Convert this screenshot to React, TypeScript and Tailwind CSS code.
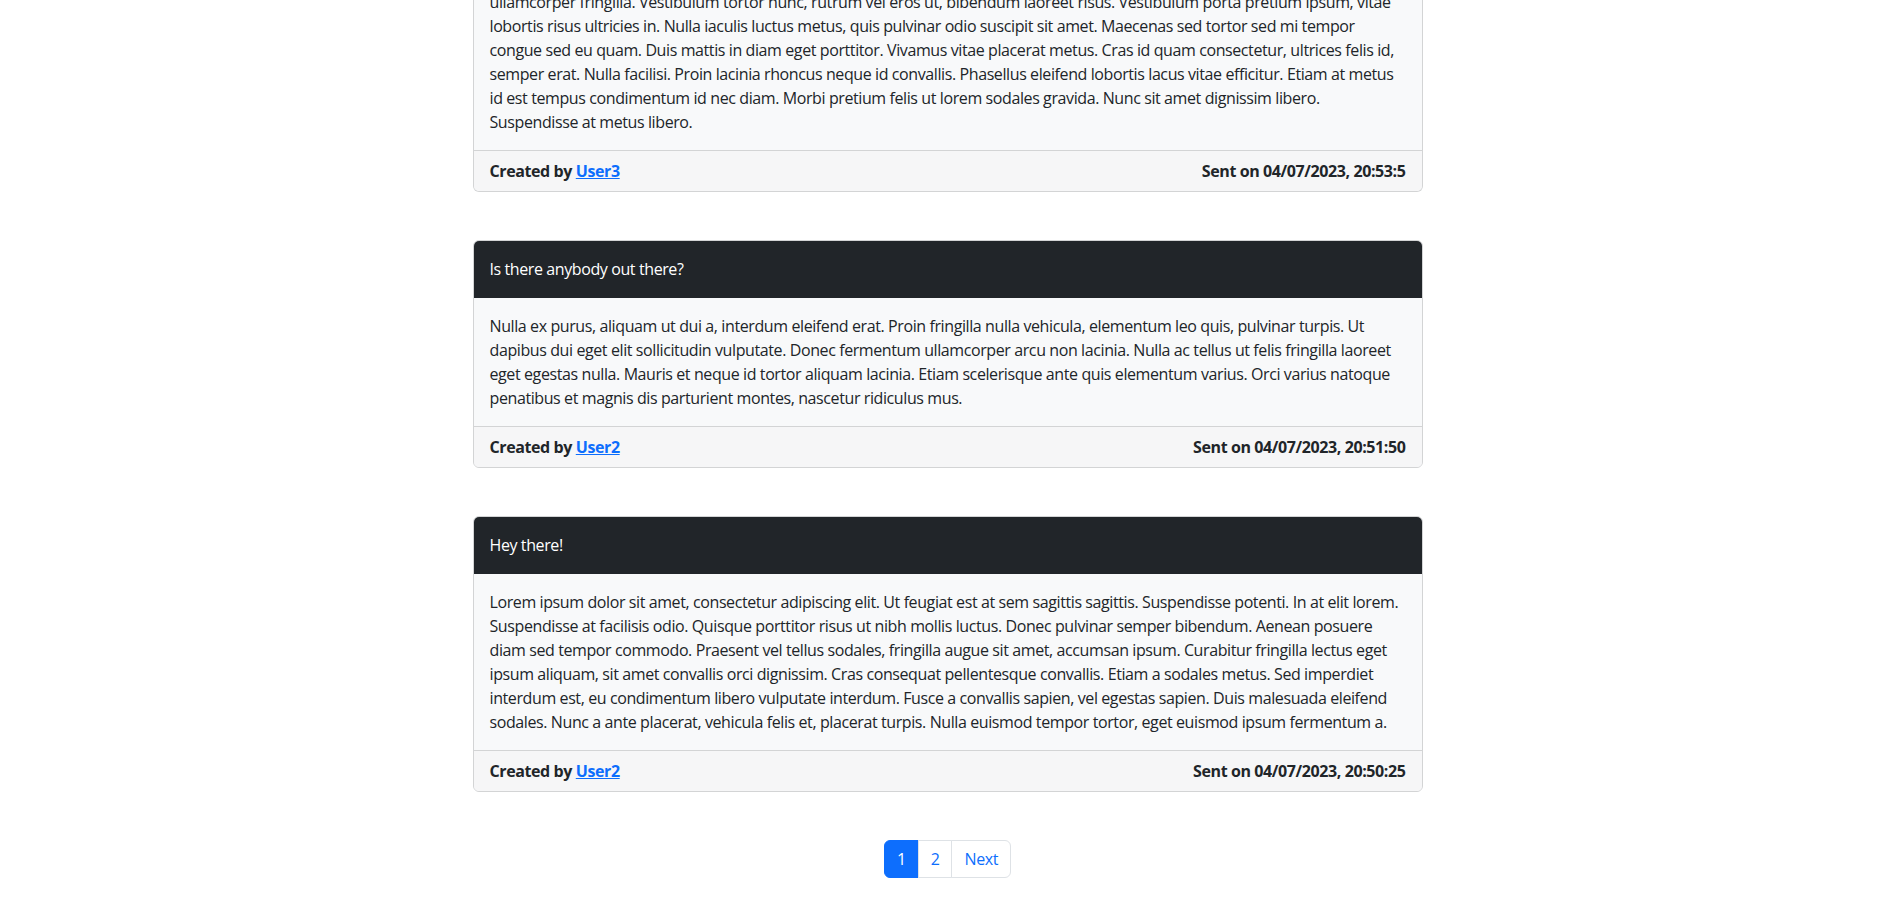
type Post = {
  id: number;
  title?: string;
  lines: string[];
  author: string;
  sentOn: string;
};

const posts: Post[] = [
  {
    id: 3,
    lines: [
      'ullamcorper fringilla. Vestibulum tortor nunc, rutrum vel eros ut, bibendum laoreet risus. Vestibulum porta pretium ipsum, vitae',
      'lobortis risus ultricies in. Nulla iaculis luctus metus, quis pulvinar odio suscipit sit amet. Maecenas sed tortor sed mi tempor',
      'congue sed eu quam. Duis mattis in diam eget porttitor. Vivamus vitae placerat metus. Cras id quam consectetur, ultrices felis id,',
      'semper erat. Nulla facilisi. Proin lacinia rhoncus neque id convallis. Phasellus eleifend lobortis lacus vitae efficitur. Etiam at metus',
      'id est tempus condimentum id nec diam. Morbi pretium felis ut lorem sodales gravida. Nunc sit amet dignissim libero.',
      'Suspendisse at metus libero.',
    ],
    author: 'User3',
    sentOn: '04/07/2023, 20:53:5',
  },
  {
    id: 2,
    title: 'Is there anybody out there?',
    lines: [
      'Nulla ex purus, aliquam ut dui a, interdum eleifend erat. Proin fringilla nulla vehicula, elementum leo quis, pulvinar turpis. Ut',
      'dapibus dui eget elit sollicitudin vulputate. Donec fermentum ullamcorper arcu non lacinia. Nulla ac tellus ut felis fringilla laoreet',
      'eget egestas nulla. Mauris et neque id tortor aliquam lacinia. Etiam scelerisque ante quis elementum varius. Orci varius natoque',
      'penatibus et magnis dis parturient montes, nascetur ridiculus mus.',
    ],
    author: 'User2',
    sentOn: '04/07/2023, 20:51:50',
  },
  {
    id: 1,
    title: 'Hey there!',
    lines: [
      'Lorem ipsum dolor sit amet, consectetur adipiscing elit. Ut feugiat est at sem sagittis sagittis. Suspendisse potenti. In at elit lorem.',
      'Suspendisse at facilisis odio. Quisque porttitor risus ut nibh mollis luctus. Donec pulvinar semper bibendum. Aenean posuere',
      'diam sed tempor commodo. Praesent vel tellus sodales, fringilla augue sit amet, accumsan ipsum. Curabitur fringilla lectus eget',
      'ipsum aliquam, sit amet convallis orci dignissim. Cras consequat pellentesque convallis. Etiam a sodales metus. Sed imperdiet',
      'interdum est, eu condimentum libero vulputate interdum. Fusce a convallis sapien, vel egestas sapien. Duis malesuada eleifend',
      'sodales. Nunc a ante placerat, vehicula felis et, placerat turpis. Nulla euismod tempor tortor, eget euismod ipsum fermentum a.',
    ],
    author: 'User2',
    sentOn: '04/07/2023, 20:50:25',
  },
];

function PostCard({ post }: { post: Post }) {
  return (
    <article className="mb-12 overflow-hidden rounded-md border border-[#d3d4d5] bg-[#f8f9fa]">
      {post.title ? (
        <header className="border-b border-[#212529] bg-[#212529] px-4 py-4 text-white">{post.title}</header>
      ) : null}
      <div className="p-4">
        {post.lines.map((line) => (
          <p key={line} className="whitespace-nowrap">
            {line}
          </p>
        ))}
      </div>
      <footer className="flex items-center justify-between border-t border-[#d3d4d5] bg-[#f6f6f7] px-4 py-2 font-bold">
        <span>
          Created by{' '}
          <a href="#" className="text-[#0d6efd] underline">
            {post.author}
          </a>
        </span>
        <span>Sent on {post.sentOn}</span>
      </footer>
    </article>
  );
}

function Pagination() {
  return (
    <nav className="flex justify-center">
      <ul className="flex">
        <li>
          <a href="#" className="block rounded-l-md border border-[#0d6efd] bg-[#0d6efd] px-3 py-1.5 text-white">
            1
          </a>
        </li>
        <li>
          <a href="#" className="-ml-px block border border-[#dee2e6] bg-white px-3 py-1.5 text-[#0d6efd]">
            2
          </a>
        </li>
        <li>
          <a href="#" className="-ml-px block rounded-r-md border border-[#dee2e6] bg-white px-3 py-1.5 text-[#0d6efd]">
            Next
          </a>
        </li>
      </ul>
    </nav>
  );
}

export default function App() {
  return (
    <div
      className="h-screen overflow-hidden bg-white text-[16px] leading-6 tracking-[-0.4px] text-[#212529]"
      style={{ fontFamily: '"Open Sans", "Noto Sans", sans-serif' }}
    >
      <main className="mx-auto -mt-[26px] w-[950px] -translate-x-[3px]">
        <div className="[&>article:first-child]:rounded-t-none [&>article:first-child]:border-t-0">
          {posts.map((post) => (
            <PostCard key={post.id} post={post} />
          ))}
        </div>
        <Pagination />
      </main>
    </div>
  );
}
